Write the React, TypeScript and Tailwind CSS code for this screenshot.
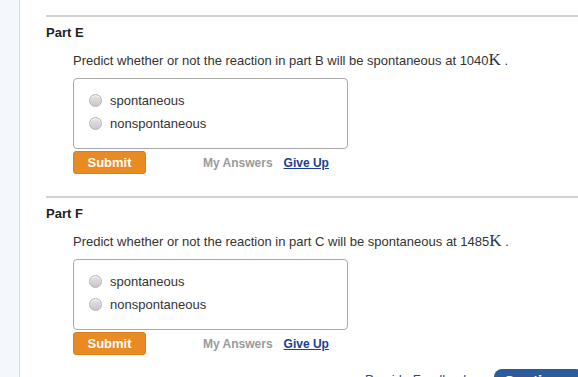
import React from 'react';

const Radio: React.FC<{ label: string }> = ({ label }) => (
  <label className="flex items-center gap-[8px] h-[23px]">
    <span className="w-[13px] h-[13px] rounded-full border border-[#b4b4b4] bg-gradient-to-b from-[#e4e4e4] to-[#c8c8c8] shadow-[inset_0_1px_1px_rgba(255,255,255,0.8)]" />
    <span className="text-[13px] text-[#333]">{label}</span>
  </label>
);

const Part: React.FC<{ name: string; part: string; temp: string }> = ({ name, part, temp }) => (
  <div className="border-t-2 border-[#d2d2d2]">
    <h2 className="pt-[7px] text-[13px] font-bold text-[#222] leading-[18px]">Part {name}</h2>
    <div className="pl-[27px]">
      <p className="mt-[9px] text-[13px] text-[#333] leading-[18px]">
        Predict whether or not the reaction in part {part} will be spontaneous at {temp}
        <span className="font-['Liberation_Serif',serif] text-[17px]">K</span> .
      </p>
      <div className="mt-[8px] w-[275px] h-[71px] rounded-[4px] border border-[#a9a9a9] pt-[10px] pl-[15px]">
        <Radio label="spontaneous" />
        <Radio label="nonspontaneous" />
      </div>
      <div className="mt-[2px] flex items-center h-[23px]">
        <button className="w-[73px] h-[23px] rounded-[3px] bg-[#e98b22] border border-[#d7801c] text-white font-bold text-[13px]">
          Submit
        </button>
        <span className="ml-[57px] text-[12px] font-bold text-[#9a9a9a]">My Answers</span>
        <a className="ml-[11px] text-[12px] font-bold text-[#1a3f8f] underline">Give Up</a>
      </div>
    </div>
  </div>
);

export default function App() {
  return (
    <div className="w-[578px] h-[377px] overflow-hidden flex bg-white font-['Liberation_Sans',Arial,sans-serif]">
      <div className="w-[20px] shrink-0 bg-[#f4f7fb] border-r border-[#cfd9e6]" />
      <div className="flex-1 min-w-0 pl-[26px] pt-[15px]">
        <Part name="E" part="B" temp="1040" />
        <div className="h-[22px]" />
        <Part name="F" part="C" temp="1485" />
        <div className="mt-[14px] flex items-start">
          <span className="ml-[319px] mt-[3px] shrink-0 whitespace-nowrap text-[13px] leading-[16px] text-[#1a4f93]">
            Provide Feedback
          </span>
          <button className="ml-[24px] shrink-0 whitespace-nowrap w-[90px] h-[24px] rounded-t-[8px] bg-[#2c5c9e] text-white font-bold text-[15px] text-left pl-[10px]">
            Continue
          </button>
        </div>
      </div>
    </div>
  );
}
